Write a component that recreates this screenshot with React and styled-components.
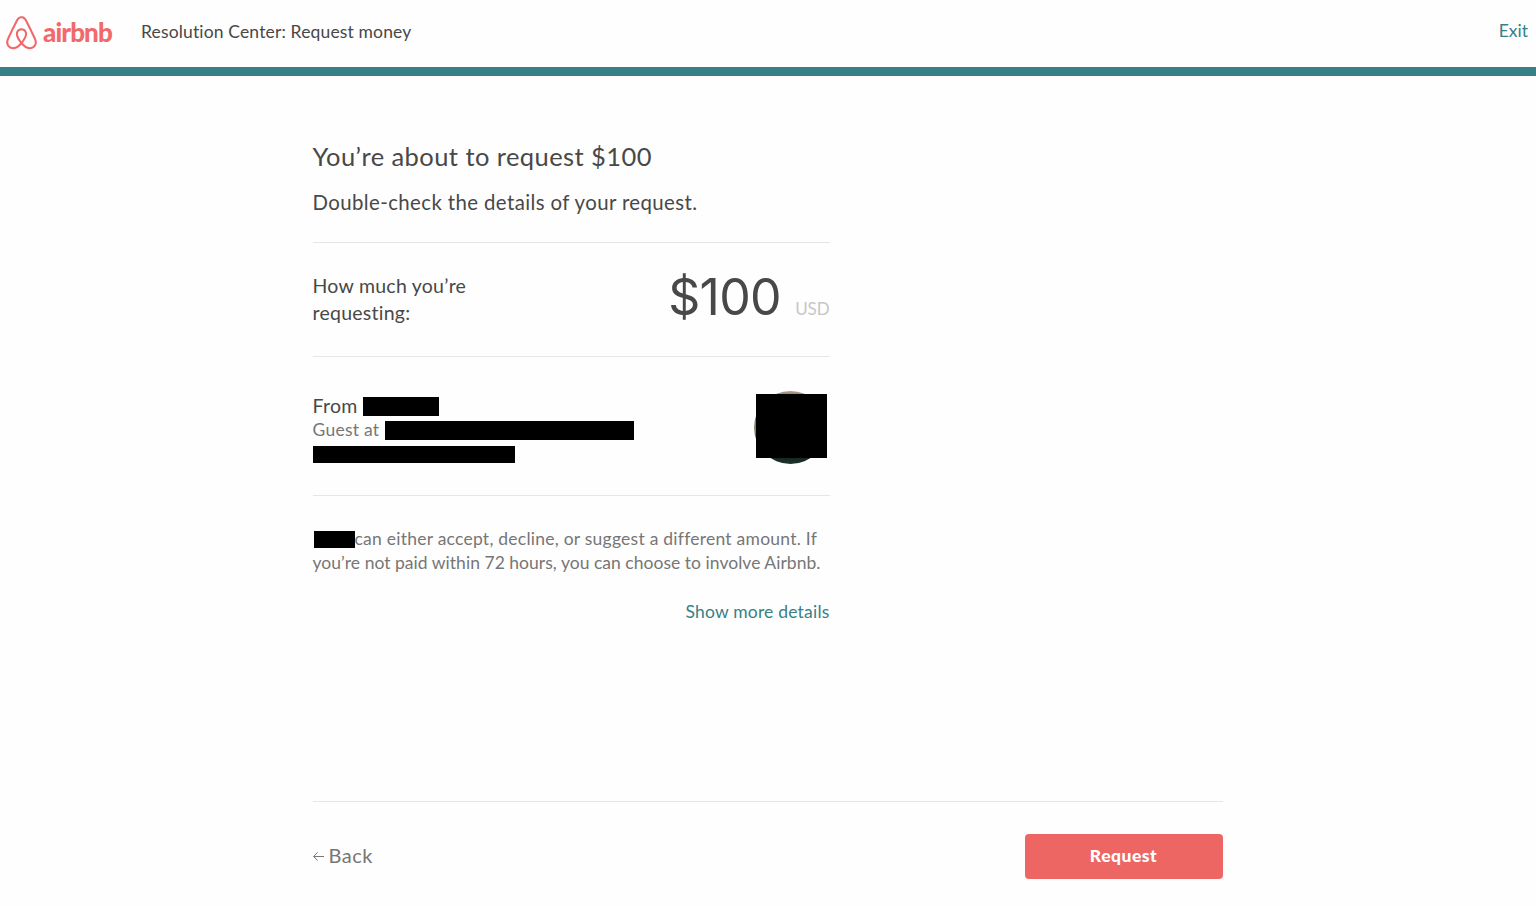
import React from "react";
import styled, { createGlobalStyle } from "styled-components";
import { SiAirbnb } from "react-icons/si";

const GlobalStyle = createGlobalStyle`
  * { box-sizing: border-box; }
  body {
    margin: 0;
    background: #fefefe;
    color: #484848;
    font-family: Lato, "Liberation Sans", sans-serif;
  }
  p, h1, h2 { margin: 0; font-weight: 400; }
`;

const Page = styled.div`
  height: 906px;
  display: flex;
  flex-direction: column;
  overflow: hidden;
`;

const Header = styled.header`
  height: 76px;
  padding: 0 8px 0 5px;
  border-bottom: 9px solid #388087;
  display: flex;
  align-items: flex-start;
`;

const Logo = styled.a`
  display: flex;
  width: 136px;
  padding-top: 16px;
  color: #f16a6b;
`;

const LogoMark = styled(SiAirbnb)`
  width: 33px;
  height: 33.5px;
  flex: none;
`;

const Wordmark = styled.span`
  margin-left: 5px;
  font-size: 26px;
  line-height: 32px;
  font-weight: 900;
  letter-spacing: -0.9px;
`;

const HeaderTitle = styled.p`
  flex: 1;
  padding-top: 20px;
  font-size: 17.5px;
  line-height: 24px;
  letter-spacing: 0.15px;
`;

const TextLink = styled.a`
  color: #388087;
  font-size: 17.5px;
  line-height: 24px;
  letter-spacing: ${(p) => p.$tracking || "0"};
  padding-top: ${(p) => p.$top || "0"};
`;

const Main = styled.main`
  width: 910px;
  margin-left: 312.5px;
  flex: 1;
  display: flex;
  flex-direction: column;
`;

const Details = styled.div`
  width: 517px;
  height: 725px;
  padding-top: 64px;
  display: flex;
  flex-direction: column;
`;

const Title = styled.h1`
  font-size: 25.5px;
  line-height: 32px;
  letter-spacing: 0.43px;
`;

const Subtitle = styled.h2`
  margin-top: 16px;
  height: 54px;
  font-size: 20.4px;
  line-height: 28px;
  letter-spacing: 0.4px;
`;

const Section = styled.section`
  height: ${(p) => p.$height};
  padding-top: ${(p) => p.$top};
  border-top: 1px solid #e6e6e6;
  display: flex;
  justify-content: space-between;
  align-items: flex-start;
`;

const Question = styled.p`
  width: 200px;
  font-size: 19.5px;
  line-height: 27px;
  letter-spacing: 0.25px;
`;

const Amount = styled.div`
  display: flex;
  align-items: baseline;
  gap: 14.5px;
  margin-top: -5px;
  font-family: Inter, sans-serif;
  font-size: 50px;
  line-height: 60px;
  letter-spacing: -0.8px;
`;

const Currency = styled.span`
  font-family: Lato, sans-serif;
  font-size: 17px;
  letter-spacing: -0.1px;
  color: #c6c6c6;
`;

const Person = styled.div`
  display: flex;
  flex-direction: column;
`;

const PersonLine = styled.div`
  display: flex;
  align-items: flex-start;
  height: ${(p) => p.$height};
  line-height: 24px;
  font-size: ${(p) => p.$size};
  color: ${(p) => p.$color};
`;

const LineLabel = styled.span`
  width: ${(p) => p.$width};
  line-height: ${(p) => p.$leading};
  letter-spacing: 0.25px;
`;

const Redacted = styled.span`
  display: inline-block;
  width: ${(p) => p.$width};
  height: ${(p) => p.$height};
  margin-top: ${(p) => p.$top || "0"};
  margin-left: ${(p) => p.$left || "0"};
  vertical-align: ${(p) => p.$align || "baseline"};
  background: #000;
`;

const Avatar = styled.div`
  width: 73px;
  height: 73px;
  margin-right: 2.5px;
  border-radius: 50%;
  background: linear-gradient(#b29c88 0, #77695c 8px, #8b8470 40px, #14251f 66px, #1c352b 100%);
`;

const AvatarCover = styled.div`
  width: 71px;
  height: 64px;
  margin: 3px 0 0 2px;
  background: #000;
`;

const Note = styled.p`
  font-size: 17.5px;
  line-height: 24px;
  white-space: nowrap;
  color: #767676;
`;

const NoteLine = styled.span`
  display: block;
  height: 24px;
  letter-spacing: ${(p) => p.$tracking};
`;

const MoreRow = styled.div`
  display: flex;
  justify-content: flex-end;
  margin-top: 25px;
`;

const Footer = styled.footer`
  border-top: 1px solid #e6e6e6;
  padding-top: 32.4px;
  display: flex;
  justify-content: space-between;
`;

const BackLink = styled.a`
  display: flex;
  align-items: center;
  gap: 4px;
  height: 44px;
  color: #767676;
  font-size: 20px;
  line-height: 24px;
  letter-spacing: 0.5px;
`;

const BackLabel = styled.span`
  padding-bottom: 3px;
`;

const RequestButton = styled.button`
  width: 198px;
  height: 45px;
  border: 0;
  border-radius: 4px;
  padding: 0 0 1px;
  background: #ed6664;
  color: #fff;
  font: 900 17.5px/24px Lato, sans-serif;
  letter-spacing: 0.5px;
`;

export default function App() {
  return (
    <Page>
      <GlobalStyle />
      <Header>
        <Logo>
          <LogoMark />
          <Wordmark>airbnb</Wordmark>
        </Logo>
        <HeaderTitle>Resolution Center: Request money</HeaderTitle>
        <TextLink $top="19px">Exit</TextLink>
      </Header>
      <Main>
        <Details>
          <Title>You’re about to request $100</Title>
          <Subtitle>Double-check the details of your request.</Subtitle>
          <Section $height="114px" $top="29px">
            <Question>How much you’re requesting:</Question>
            <Amount>
              $100<Currency>USD</Currency>
            </Amount>
          </Section>
          <Section $height="139px" $top="34px">
            <Person>
              <PersonLine $height="28px" $size="19.5px" $color="#484848">
                <LineLabel $width="50px" $leading="29px">From</LineLabel>
                <Redacted $width="76px" $height="19px" $top="6px" />
              </PersonLine>
              <PersonLine $height="27px" $size="17.5px" $color="#767676">
                <LineLabel $width="72px" $leading="22px">Guest at</LineLabel>
                <Redacted $width="249px" $height="19px" $top="2px" />
              </PersonLine>
              <Redacted $width="202px" $height="17px" />
            </Person>
            <Avatar>
              <AvatarCover />
            </Avatar>
          </Section>
          <Section as="div" $height="80px" $top="31px">
            <Note>
              <NoteLine $tracking="0.24px">
                <Redacted $width="41px" $height="17px" $left="1px" $align="-3px" />
                can either accept, decline, or suggest a different amount. If
              </NoteLine>
              <NoteLine $tracking="0.03px">
                you’re not paid within 72 hours, you can choose to involve Airbnb.
              </NoteLine>
            </Note>
          </Section>
          <MoreRow>
            <TextLink $tracking="0.2px">Show more details</TextLink>
          </MoreRow>
        </Details>
        <Footer>
          <BackLink>
            <svg width="12" height="12" viewBox="0 0 12 12" fill="none" stroke="#767676" strokeWidth="1">
              <path d="M11 6.5H0.8M4.6 2.4L0.6 6.5L4.6 10.6" />
            </svg>
            <BackLabel>Back</BackLabel>
          </BackLink>
          <RequestButton>Request</RequestButton>
        </Footer>
      </Main>
    </Page>
  );
}
